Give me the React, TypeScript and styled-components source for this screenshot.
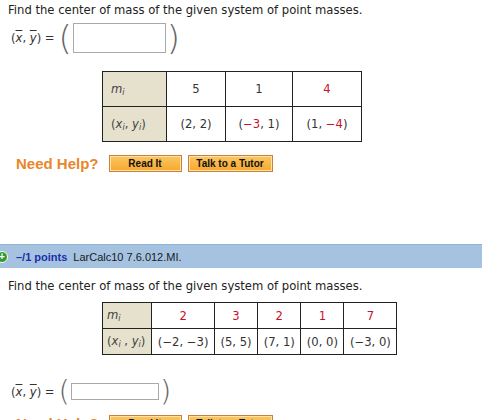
import React from "react";
import styled, { createGlobalStyle } from "styled-components";

const GlobalStyle = createGlobalStyle`
  body {
    margin: 0;
    background: #ffffff;
    font-family: "DejaVu Sans", Verdana, sans-serif;
    color: #222;
    overflow: hidden;
  }
`;

type Cell = { text: React.ReactNode; red?: boolean };

const Minus = () => <span>&minus;</span>;

const Red = styled.span`
  color: #c8102e;
`;

const XBar = () => (
  <Vars>
    (<Over>x</Over>, <Over>y</Over>) =
  </Vars>
);

const AnswerRow = ({ tall }: { tall?: boolean }) => (
  <Answer $tall={tall}>
    <XBar />
    <Paren $tall={tall}>(</Paren>
    <AnswerBox $tall={tall} />
    <Paren $tall={tall}>)</Paren>
  </Answer>
);

const HelpRow = ({ gap }: { gap: number }) => (
  <Help $gap={gap}>
    <HelpLabel>Need Help?</HelpLabel>
    <HelpButton $w={73}>Read It</HelpButton>
    <HelpButton $w={85}>Talk to a Tutor</HelpButton>
  </Help>
);

const Sub = ({ children }: { children: React.ReactNode }) => (
  <i>
    {children}
    <SubI>i</SubI>
  </i>
);

const firstMasses: Cell[] = [{ text: "5" }, { text: "1" }, { text: "4", red: true }];
const firstPoints: React.ReactNode[] = [
  "(2, 2)",
  <>
    (<Red><Minus />3</Red>, 1)
  </>,
  <>
    (1, <Red><Minus />4</Red>)
  </>,
];
const firstWidths = [59, 67, 69];

const secondMasses = ["2", "3", "2", "1", "7"];
const secondPoints: React.ReactNode[] = [
  <>(<Minus />2, <Minus />3)</>,
  "(5, 5)",
  "(7, 1)",
  "(0, 0)",
  <>(<Minus />3, 0)</>,
];

const App = () => {
  return (
    <Page>
      <GlobalStyle />
      <Question>
        <Prompt>Find the center of mass of the given system of point masses.</Prompt>
        <AnswerRow tall />
        <BigTable>
          <tbody>
            <tr>
              <HeadCell $w={64}>
                <Sub>m</Sub>
              </HeadCell>
              {firstMasses.map((c, i) => (
                <BigCell key={i} $w={firstWidths[i]} $red={c.red}>
                  {c.text}
                </BigCell>
              ))}
            </tr>
            <tr>
              <HeadCell $w={64}>
                (<Sub>x</Sub>, <Sub>y</Sub>)
              </HeadCell>
              {firstPoints.map((p, i) => (
                <BigCell key={i} $w={firstWidths[i]}>
                  {p}
                </BigCell>
              ))}
            </tr>
          </tbody>
        </BigTable>
        <HelpRow gap={13} />
      </Question>

      <Bar>
        <PlusDot>+</PlusDot>
        <Points>&ndash;/1 points</Points>
        <Code>LarCalc10 7.6.012.MI.</Code>
      </Bar>

      <Question2>
        <Prompt>Find the center of mass of the given system of point masses.</Prompt>
        <SmallTable>
          <tbody>
            <tr>
              <SmallHead>
                <Sub>m</Sub>
              </SmallHead>
              {secondMasses.map((m, i) => (
                <SmallCell key={i} $red>
                  {m}
                </SmallCell>
              ))}
            </tr>
            <tr>
              <SmallHead>
                (<Sub>x</Sub> , <Sub>y</Sub>)
              </SmallHead>
              {secondPoints.map((p, i) => (
                <SmallCell key={i}>{p}</SmallCell>
              ))}
            </tr>
          </tbody>
        </SmallTable>
        <AnswerRow />
        <HelpRow gap={9} />
      </Question2>
    </Page>
  );
};

export default App;

const Page = styled.div`
  width: 482px;
  height: 420px;
  overflow: hidden;
  font-size: 11.6px;
`;

const Question = styled.div`
  padding: 2px 8px 0;
  height: 244px;
  box-sizing: border-box;
`;

const Question2 = styled.div`
  padding: 10px 8px 0;
`;

const Prompt = styled.div`
  line-height: 16px;
  font-size: 11.6px;
`;

const Answer = styled.div<{ $tall?: boolean }>`
  display: flex;
  align-items: center;
  margin-top: ${(p) => (p.$tall ? "3px" : "22px")};
  padding-left: 3px;
`;

const Vars = styled.span`
  font-size: 11.6px;
  margin-right: 3px;
  color: #333;
  white-space: nowrap;
  flex-shrink: 0;
`;

const Over = styled.i`
  text-decoration: overline;
`;

const Paren = styled.span<{ $tall?: boolean }>`
  font-family: "DejaVu Sans", sans-serif;
  font-weight: 200;
  font-size: ${(p) => (p.$tall ? "34px" : "29px")};
  line-height: 1;
  color: #666;
  margin: 0 1px;
`;

const AnswerBox = styled.div<{ $tall?: boolean }>`
  width: ${(p) => (p.$tall ? "91px" : "86px")};
  height: ${(p) => (p.$tall ? "28px" : "15px")};
  border: 1px solid #aaa;
  background: #fff;
  flex-shrink: 0;
`;

const BigTable = styled.table`
  border-collapse: collapse;
  margin: 16px 0 0 94px;
  font-size: 11.6px;
  td {
    border: 1px solid #222;
  }
`;

const HeadCell = styled.td<{ $w: number }>`
  width: ${(p) => p.$w}px;
  height: 35px;
  background: #e5e1cc;
  color: #444;
  padding: 0 0 0 8px;
  box-sizing: border-box;
`;

const BigCell = styled.td<{ $w: number; $red?: boolean }>`
  width: ${(p) => p.$w}px;
  height: 35px;
  box-sizing: border-box;
  text-align: center;
  padding: 0;
  color: ${(p) => (p.$red ? "#c8102e" : "#333")};
`;

const SubI = styled.sub`
  font-size: 8px;
  vertical-align: -2px;
`;

const SmallTable = styled.table`
  border-collapse: collapse;
  margin: 8px 0 0 94px;
  font-size: 11.6px;
  td {
    border: 1px solid #222;
  }
`;

const SmallHead = styled.td`
  height: 25px;
  background: #e5e1cc;
  color: #444;
  padding: 0 6px 0 4px;
`;

const SmallCell = styled.td<{ $red?: boolean }>`
  height: 25px;
  text-align: center;
  padding: 0 5.5px;
  color: ${(p) => (p.$red ? "#c8102e" : "#333")};
`;

const Help = styled.div<{ $gap: number }>`
  display: flex;
  align-items: center;
  gap: 6px;
  margin-top: ${(p) => p.$gap}px;
  padding-left: 8px;
`;

const HelpLabel = styled.span`
  font-family: "Liberation Sans", Arial, sans-serif;
  font-weight: bold;
  font-size: 15px;
  color: #e8872a;
  margin-right: 4px;
`;

const HelpButton = styled.span<{ $w: number }>`
  width: ${(p) => p.$w}px;
  height: 17px;
  box-sizing: border-box;
  display: flex;
  align-items: center;
  justify-content: center;
  font-family: "Liberation Sans", Arial, sans-serif;
  font-weight: bold;
  font-size: 10px;
  color: #111;
  border: 1px solid #c7813a;
  box-shadow: inset 0 0 0 1px #fde3a8;
  background: linear-gradient(#fcc661, #f6a830);
`;

const Bar = styled.div`
  height: 23px;
  display: flex;
  align-items: center;
  background: #a5c3e1;
  border-top: 1px solid #93b3d3;
  font-family: "Liberation Sans", Arial, sans-serif;
  font-size: 11px;
`;

const PlusDot = styled.span`
  width: 10px;
  height: 10px;
  border-radius: 50%;
  background: #2f9a2f;
  color: #fff;
  font-weight: bold;
  font-size: 10px;
  line-height: 10px;
  text-align: center;
  margin-left: -4px;
  margin-right: 8px;
  border: 1px solid #fff;
`;

const Points = styled.span`
  font-weight: bold;
  color: #1c2fa8;
  margin-right: 6px;
`;

const Code = styled.span`
  color: #1a1a1a;
`;
